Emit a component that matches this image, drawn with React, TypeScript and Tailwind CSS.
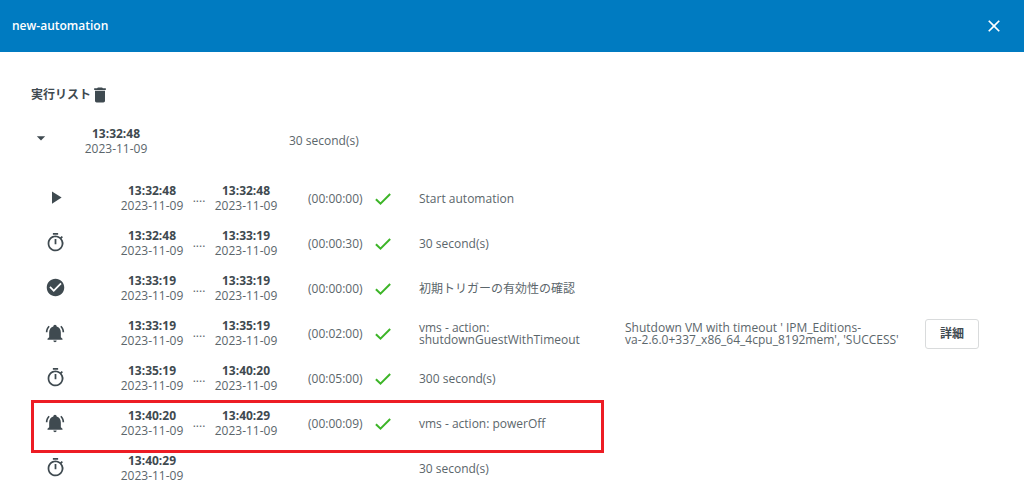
import {
  MdArrowDropDown,
  MdCheckCircle,
  MdClose,
  MdDelete,
  MdOutlineTimer,
  MdPlayArrow,
} from "react-icons/md";

const DATE = "2023-11-09";

const BellRing = ({ className }: { size?: number; className?: string }) => (
  <svg width="20" height="20" viewBox="0 0 24 24" fill="currentColor" className={className}>
    <path d="M21 19v1H3v-1l2-2v-6c0-3.1 2.03-5.83 5-6.71V4a2 2 0 0 1 4 0v.29c2.97.88 5 3.61 5 6.71v6l2 2M14 21a2 2 0 0 1-4 0" />
    <path d="M19.75 3.19l-1.42 1.42C20.04 6.3 21 8.6 21 11h2c0-2.93-1.16-5.75-3.25-7.81M1 11h2c0-2.4.96-4.7 2.67-6.39L4.25 3.19C2.16 5.25 1 8.07 1 11z" />
  </svg>
);

const Tick = () => (
  <svg width="20" height="20" viewBox="0 0 24 24" fill="none" className="mx-auto text-[#3db528]">
    <path d="M3.5 12.2l5.5 5.4L20.6 6" stroke="currentColor" strokeWidth="2.4" />
  </svg>
);

const icons = {
  play: MdPlayArrow,
  timer: MdOutlineTimer,
  check: MdCheckCircle,
  bell: BellRing,
};

type Step = {
  icon: keyof typeof icons;
  start: string;
  end?: string;
  duration?: string;
  label: string;
  message?: string;
  highlighted?: boolean;
};

const steps: Step[] = [
  { icon: "play", start: "13:32:48", end: "13:32:48", duration: "00:00:00", label: "Start automation" },
  { icon: "timer", start: "13:32:48", end: "13:33:19", duration: "00:00:30", label: "30 second(s)" },
  { icon: "check", start: "13:33:19", end: "13:33:19", duration: "00:00:00", label: "初期トリガーの有効性の確認" },
  {
    icon: "bell",
    start: "13:33:19",
    end: "13:35:19",
    duration: "00:02:00",
    label: "vms - action: shutdownGuestWithTimeout",
    message: "Shutdown VM with timeout ' IPM_Editions-\nva-2.6.0+337_x86_64_4cpu_8192mem', 'SUCCESS'",
  },
  { icon: "timer", start: "13:35:19", end: "13:40:20", duration: "00:05:00", label: "300 second(s)" },
  {
    icon: "bell",
    start: "13:40:20",
    end: "13:40:29",
    duration: "00:00:09",
    label: "vms - action: powerOff",
    highlighted: true,
  },
  { icon: "timer", start: "13:40:29", label: "30 second(s)" },
];

const Timestamp = ({ time }: { time: string }) => (
  <div className="text-center leading-[15px] whitespace-nowrap">
    <div className="font-bold text-[#3f4a50]">{time}</div>
    <div>{DATE}</div>
  </div>
);

const StepRow = ({ step }: { step: Step }) => {
  const Icon = icons[step.icon];
  return (
    <tr className="h-[45px]">
      <td className="relative pl-0.5">
        <Icon size={21} className="mx-auto text-[#3f4a50]" />
        {/* Highlight frame around the row */}
        {step.highlighted && (
          <div className="absolute top-0 left-0 w-[573px] h-[53px] border-3 border-[#ed1c24] pointer-events-none" />
        )}
      </td>
      <td className="pl-[42px]">
        <Timestamp time={step.start} />
      </td>
      <td className="text-center">{step.end && "...."}</td>
      <td>{step.end && <Timestamp time={step.end} />}</td>
      <td className="pl-[29px] pt-0.5 whitespace-nowrap">{step.duration && `(${step.duration})`}</td>
      <td className="pt-0.5">{step.duration && <Tick />}</td>
      <td className="pl-5 pt-0.5 leading-3">{step.label}</td>
      <td className="pl-5 pt-0.5 leading-3 whitespace-pre-line">{step.message}</td>
      <td className="pl-5 pt-0.5">
        {step.message && (
          <button className="w-[54px] h-[30px] border border-[#d9dbdc] rounded-[3px] font-bold text-[#3f4a50]">
            詳細
          </button>
        )}
      </td>
    </tr>
  );
};

export default function App() {
  return (
    <div className="bg-white text-[12px] text-[#5b666b] font-['Open_Sans','Noto_Sans_CJK_JP',sans-serif]">
      <header className="flex items-center justify-between h-[52px] pl-3 pr-5 bg-[#007bc1] text-white">
        <h1 className="font-semibold">new-automation</h1>
        <button aria-label="Close">
          <MdClose size={20} />
        </button>
      </header>

      <main className="pl-[31px] pr-8 pt-8">
        <div className="flex items-center h-[22px] text-[#3f4a50]">
          <h2 className="font-bold">実行リスト</h2>
          <button aria-label="Delete" className="-ml-px">
            <MdDelete size={20} />
          </button>
        </div>

        {/* Execution summary */}
        <div className="flex items-center h-[45px] mt-3">
          <button aria-label="Collapse" className="pb-1.5 text-[#3f4a50]">
            <MdArrowDropDown size={20} />
          </button>
          <div className="w-[66px] ml-8">
            <Timestamp time="13:32:48" />
          </div>
          <span className="ml-[140px]">30 second(s)</span>
        </div>

        {/* Executed steps */}
        <table className="w-full table-fixed mt-3 text-left">
          <colgroup>
            <col className="w-[46px]" />
            <col className="w-[108px]" />
            <col className="w-7" />
            <col className="w-[66px]" />
            <col className="w-[88px]" />
            <col className="w-8" />
            <col className="w-[206px]" />
            <col />
            <col className="w-[87px]" />
          </colgroup>
          <tbody>
            {steps.map((step, i) => (
              <StepRow key={i} step={step} />
            ))}
          </tbody>
        </table>
      </main>
    </div>
  );
}
